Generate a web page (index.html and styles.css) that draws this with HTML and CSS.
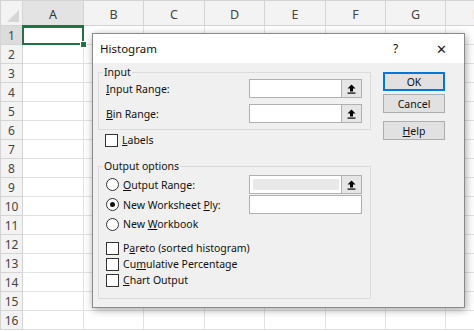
FILE: index.html
```html
<!DOCTYPE html>
<html lang="en">
<head>
    <meta charset="UTF-8">
    <title>Histogram</title>
    <link rel="stylesheet" href="styles.css">
</head>
<body>
    <table class="sheet">
        <colgroup>
            <col class="c-head"><col class="c-a"><col class="c-b"><col class="c-c"><col class="c-d">
            <col class="c-e"><col class="c-f"><col class="c-g"><col class="c-h">
        </colgroup>
        <tr class="col-heads">
            <th class="corner"><span class="corner-tri"></span></th>
            <th class="sel">A</th><th>B</th><th>C</th><th>D</th><th>E</th><th>F</th><th>G</th><th class="last">H</th>
        </tr>
        <tr><th class="sel">1</th><td class="active"><div class="cursor"><span class="handle"></span></div></td><td></td><td></td><td></td><td></td><td></td><td></td><td></td></tr>
        <tr><th>2</th><td></td><td></td><td></td><td></td><td></td><td></td><td></td><td></td></tr>
        <tr><th>3</th><td></td><td></td><td></td><td></td><td></td><td></td><td></td><td></td></tr>
        <tr><th>4</th><td></td><td></td><td></td><td></td><td></td><td></td><td></td><td></td></tr>
        <tr><th>5</th><td></td><td></td><td></td><td></td><td></td><td></td><td></td><td></td></tr>
        <tr><th>6</th><td></td><td></td><td></td><td></td><td></td><td></td><td></td><td></td></tr>
        <tr><th>7</th><td></td><td></td><td></td><td></td><td></td><td></td><td></td><td></td></tr>
        <tr><th>8</th><td></td><td></td><td></td><td></td><td></td><td></td><td></td><td></td></tr>
        <tr><th>9</th><td></td><td></td><td></td><td></td><td></td><td></td><td></td><td></td></tr>
        <tr><th>10</th><td></td><td></td><td></td><td></td><td></td><td></td><td></td><td></td></tr>
        <tr><th>11</th><td></td><td></td><td></td><td></td><td></td><td></td><td></td><td></td></tr>
        <tr><th>12</th><td></td><td></td><td></td><td></td><td></td><td></td><td></td><td></td></tr>
        <tr><th>13</th><td></td><td></td><td></td><td></td><td></td><td></td><td></td><td></td></tr>
        <tr><th>14</th><td></td><td></td><td></td><td></td><td></td><td></td><td></td><td></td></tr>
        <tr><th>15</th><td></td><td></td><td></td><td></td><td></td><td></td><td></td><td></td></tr>
        <tr><th>16</th><td></td><td></td><td></td><td></td><td></td><td></td><td></td><td></td></tr>
    </table>

    <div class="dialog">
        <div class="titlebar">
            <span class="title">Histogram</span>
            <span class="help-q">?</span>
            <span class="close">&#x2715;</span>
        </div>
        <div class="dialog-body">
            <div class="left">
                <fieldset class="group group-input">
                    <legend>Input</legend>
                    <div class="row">
                        <label><u>I</u>nput Range:</label>
                        <div class="field"><span class="field-text"></span><span class="pick"><svg width="9" height="10" viewBox="0 0 9 10"><path d="M4.5 0.5 L8.5 4.5 L6 4.5 L6 7.5 L3 7.5 L3 4.5 L0.5 4.5 Z" fill="#000"/><rect x="0.5" y="8.5" width="8" height="1.2" fill="#000"/></svg></span></div>
                    </div>
                    <div class="row">
                        <label><u>B</u>in Range:</label>
                        <div class="field"><span class="field-text"></span><span class="pick"><svg width="9" height="10" viewBox="0 0 9 10"><path d="M4.5 0.5 L8.5 4.5 L6 4.5 L6 7.5 L3 7.5 L3 4.5 L0.5 4.5 Z" fill="#000"/><rect x="0.5" y="8.5" width="8" height="1.2" fill="#000"/></svg></span></div>
                    </div>
                </fieldset>

                <div class="option labels-opt"><span class="check"></span><span><u>L</u>abels</span></div>

                <fieldset class="group group-output">
                    <legend>Output options</legend>
                    <div class="row">
                        <span class="option"><span class="radio"></span><span><u>O</u>utput Range:</span></span>
                        <div class="field disabled"><span class="field-text"></span><span class="pick"><svg width="9" height="10" viewBox="0 0 9 10"><path d="M4.5 0.5 L8.5 4.5 L6 4.5 L6 7.5 L3 7.5 L3 4.5 L0.5 4.5 Z" fill="#000"/><rect x="0.5" y="8.5" width="8" height="1.2" fill="#000"/></svg></span></div>
                    </div>
                    <div class="row">
                        <span class="option"><span class="radio on"></span><span>New Worksheet <u>P</u>ly:</span></span>
                        <div class="field"><span class="field-text"></span></div>
                    </div>
                    <div class="row row-wb">
                        <span class="option"><span class="radio"></span><span>New <u>W</u>orkbook</span></span>
                    </div>
                    <div class="checks">
                        <div class="option"><span class="check"></span><span>P<u>a</u>reto (sorted histogram)</span></div>
                        <div class="option"><span class="check"></span><span>Cu<u>m</u>ulative Percentage</span></div>
                        <div class="option"><span class="check"></span><span><u>C</u>hart Output</span></div>
                    </div>
                </fieldset>
            </div>

            <div class="buttons">
                <button class="btn default">OK</button>
                <button class="btn">Cancel</button>
                <button class="btn btn-help"><u>H</u>elp</button>
            </div>
        </div>
    </div>
</body>
</html>
```

FILE: styles.css
```css
body {
    margin: 0;
    padding: 0;
    background-color: #fff;
    overflow: hidden;
    font-family: "Noto Sans", "Open Sans", sans-serif;
}
.sheet {
    border-collapse: collapse;
    table-layout: fixed;
    width: 520px;
}
.c-head { width: 22px; }
.c-a, .c-c, .c-e { width: 61px; }
.c-b, .c-d, .c-f, .c-g { width: 60px; }
.c-h { width: 76px; }
.sheet tr {
    height: 19px;
}
.sheet tr.col-heads {
    height: 25px;
}
.sheet th {
    background-color: #f3f3f3;
    border: 1px solid #d4d4d4;
    color: #444;
    font-weight: normal;
    font-size: 12px;
    padding: 0;
}
.sheet .col-heads th {
    font-size: 12.5px;
    padding-top: 3px;
}
.sheet .col-heads th.last {
    text-align: left;
    padding-left: 27px;
}
.sheet th.sel {
    background-color: #dcdcdc;
}
.sheet .col-heads th.sel {
    background-color: #e3e3e3;
    border-bottom: 2px solid #217346;
    color: #333;
}
.corner {
    position: relative;
}
.corner-tri {
    position: absolute;
    right: 3px;
    bottom: 3px;
    width: 0;
    height: 0;
    border-left: 12px solid transparent;
    border-bottom: 12px solid #d6d6d6;
}
.sheet td {
    border: 1px solid #e2e2e2;
    padding: 0;
}
.sheet td.active {
    position: relative;
}
.cursor {
    position: absolute;
    left: -1px;
    top: -1px;
    right: -1px;
    bottom: -1px;
    border: 2px solid #217346;
}
.handle {
    position: absolute;
    right: -5px;
    bottom: -5px;
    width: 5px;
    height: 5px;
    background-color: #217346;
    border: 1px solid #fff;
}

/* dialog */
.dialog {
    position: absolute;
    left: 92px;
    top: 33px;
    width: 371px;
    height: 273px;
    border: 1px solid #8a8a8a;
    background-color: #f0f0f0;
    box-shadow: 1px 2px 8px rgba(0, 0, 0, 0.35);
    font-size: 10.5px;
    color: #111;
}
.titlebar {
    height: 29px;
    background-color: #fff;
    display: flex;
    align-items: center;
    padding-left: 7px;
}
.title {
    font-size: 11.5px;
    flex: 1;
}
.help-q {
    font-size: 12px;
    width: 43px;
}
.close {
    font-size: 13px;
    width: 28px;
    color: #222;
}
.dialog-body {
    display: flex;
    padding: 2px 0 0 5px;
}
.left {
    width: 273px;
}
.group {
    margin: 0;
    border: 1px solid #dcdcdc;
    padding: 0 8px 6px 7px;
}
.group legend {
    padding: 0 1px;
    margin-left: -3px;
    line-height: 14px;
}
.row {
    display: flex;
    align-items: center;
    justify-content: space-between;
    height: 19px;
}
.group-input .row + .row {
    margin-top: 6px;
}
.row label {
    line-height: 14px;
}
.field {
    width: 113px;
    height: 19px;
    box-sizing: border-box;
    border: 1px solid #b0b0b0;
    background-color: #fff;
    display: flex;
}
.field-text {
    flex: 1;
}
.field.disabled .field-text {
    margin: 3px 2px 3px 3px;
    background-color: #e9e9e9;
}
.pick {
    width: 19px;
    background-color: #e6e6e6;
    border-left: 1px solid #b0b0b0;
    display: flex;
    align-items: center;
    justify-content: center;
}
.option {
    display: flex;
    align-items: center;
    line-height: 14px;
}
.check {
    width: 11px;
    height: 11px;
    border: 1px solid #333;
    background-color: #fff;
    margin-right: 4px;
}
.radio {
    width: 11px;
    height: 11px;
    border: 1px solid #333;
    border-radius: 50%;
    background-color: #fff;
    margin-right: 4px;
    position: relative;
}
.radio.on::after {
    content: "";
    position: absolute;
    left: 3px;
    top: 3px;
    width: 5px;
    height: 5px;
    border-radius: 50%;
    background-color: #111;
}
.labels-opt {
    margin: 3px 0 12px 7px;
}
.group-output .row + .row {
    margin-top: 1px;
}
.group-output .row:first-of-type {
    margin-top: 2px;
}
.row-wb {
    height: 18px;
}
.group-output .row-wb {
    margin-top: 3px;
}
.checks {
    margin-top: 7px;
    padding-bottom: 4px;
}
.checks .option {
    height: 16px;
}
.buttons {
    display: flex;
    flex-direction: column;
    margin-left: 12px;
    margin-top: 7px;
}
.btn {
    width: 62px;
    height: 19px;
    margin: 0 0 3px 0;
    padding: 0;
    font-family: inherit;
    font-size: 10.5px;
    color: #111;
    background-color: #e1e1e1;
    border: 1px solid #adadad;
}
.btn.default {
    border: 1px solid #0078d7;
    box-shadow: inset 0 0 0 1px #0078d7;
}
.btn-help {
    margin-top: 5px;
}
```
